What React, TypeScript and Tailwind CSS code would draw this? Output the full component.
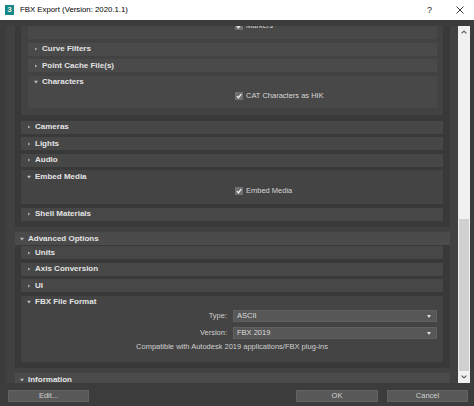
import React from "react";

const font = "font-['Liberation_Sans',Arial,sans-serif]";

function Caret({ open }: { open?: boolean }) {
  return open ? (
    <svg width="4" height="4" viewBox="0 0 4 4" className="shrink-0">
      <path d="M0 0.8 H4 L2 3.4 Z" fill="#bdbdbd" />
    </svg>
  ) : (
    <svg width="4" height="4" viewBox="0 0 4 4" className="shrink-0">
      <path d="M1 0.4 L3.4 2 L1 3.6 Z" fill="#a9a9a9" />
    </svg>
  );
}

function Title({ text, open }: { text: string; open?: boolean }) {
  return (
    <>
      <Caret open={open} />
      <span className="text-[8px] font-bold leading-none text-[#e4e4e4]">{text}</span>
    </>
  );
}

/* collapsed sub rollout */
function Bar({ text, tone }: { text: string; tone: "l1" | "l2" }) {
  return (
    <div
      className={
        tone === "l1"
          ? "flex h-[13px] shrink-0 items-center gap-[4px] bg-[#474747] pl-[6px]"
          : "flex h-[13px] shrink-0 items-center gap-[4px] bg-[#4a4a4a] pl-[6px]"
      }
    >
      <Title text={text} />
    </div>
  );
}

function Check({ label }: { label: string }) {
  return (
    <div className="flex h-[9px] items-center gap-[3px]">
      <div className="flex h-[8px] w-[8px] items-center justify-center bg-[#707070]">
        <svg width="6" height="6" viewBox="0 0 6 6">
          <path d="M0.8 3.1 L2.4 4.7 L5.3 1.2" stroke="#f2f2f2" strokeWidth="1.3" fill="none" />
        </svg>
      </div>
      <span className="text-[7.5px] leading-none text-[#d6d6d6]">{label}</span>
    </div>
  );
}

function Dropdown({ value }: { value: string }) {
  return (
    <div className="flex h-[12px] flex-1 items-center justify-between border border-[#606060] bg-[#575757] pl-[3px] pr-[5px]">
      <span className="text-[7.5px] leading-none text-[#dcdcdc]">{value}</span>
      <svg width="4" height="3" viewBox="0 0 4 3">
        <path d="M0 0 H4 L2 3 Z" fill="#e0e0e0" />
      </svg>
    </div>
  );
}

function Button({ label, w }: { label: string; w: string }) {
  return (
    <div
      className={`${w} flex h-[12px] items-center justify-center border border-[#626262] bg-[#585858] text-[7.5px] leading-none text-[#d2d2d2]`}
    >
      {label}
    </div>
  );
}

function Scrollbar() {
  return (
    <div className="flex w-[12px] shrink-0 flex-col bg-[#f0f0f0]">
      <div className="flex h-[12px] items-center justify-center">
        <svg width="6" height="4" viewBox="0 0 6 4">
          <path d="M0.6 3.4 L3 1 L5.4 3.4" stroke="#606060" strokeWidth="1.2" fill="none" />
        </svg>
      </div>
      <div className="flex flex-1 flex-col justify-end">
        <div className="mx-[1px] h-[152px] bg-[#d0d0d0]" />
      </div>
      <div className="flex h-[12px] items-center justify-center">
        <svg width="6" height="4" viewBox="0 0 6 4">
          <path d="M0.6 0.6 L3 3 L5.4 0.6" stroke="#606060" strokeWidth="1.2" fill="none" />
        </svg>
      </div>
    </div>
  );
}

export default function App() {
  return (
    <div className={`${font} flex h-[406px] w-[474px] flex-col overflow-hidden bg-[#3c3c3c]`}>
      {/* window caption */}
      <div className="flex h-[20px] shrink-0 items-center bg-white pl-[5px] pr-[10px]">
        <div className="flex h-[10px] w-[9px] items-center justify-center bg-[#15868c] text-[8px] font-bold leading-none text-[#f3f0d8]">
          3
        </div>
        <span className="ml-[6px] text-[7.8px] leading-none text-black">FBX Export (Version: 2020.1.1)</span>
        <div className="ml-auto flex items-center gap-[24px]">
          <span className="text-[9px] leading-none text-[#222]">?</span>
          <svg width="8" height="8" viewBox="0 0 8 8">
            <path d="M0.5 0.5 L7.5 7.5 M7.5 0.5 L0.5 7.5" stroke="#222" strokeWidth="0.9" />
          </svg>
        </div>
      </div>

      {/* rollout viewport */}
      <div className="ml-[6px] mr-[4px] mt-[6px] flex h-[357px] shrink-0 bg-[#414141]">
        <div className="flex flex-1 flex-col gap-[5px] overflow-hidden pl-[9px] pr-[8px]">
          {/* Include */}
          <div className="flex shrink-0 flex-col gap-[3.5px] bg-[#393939] pb-[6.5px] pl-[6px] pr-[7px]">
            {/* Animation */}
            <div className="mb-[2px] flex flex-col gap-[3.5px] bg-[#424242] pb-[7px] pl-[7px] pr-[6px]">
              <div className="h-[13px] shrink-0 overflow-hidden bg-[#484848] pl-[207px]">
                <div className="-mt-[5px]">
                  <Check label="Markers" />
                </div>
              </div>
              <Bar text="Curve Filters" tone="l2" />
              <Bar text="Point Cache File(s)" tone="l2" />
              <div className="flex flex-col bg-[#484848]">
                <div className="flex h-[13px] items-center gap-[4px] pl-[6px]">
                  <Title text="Characters" open />
                </div>
                <div className="pb-[7.5px] pl-[207px] pt-[3px]">
                  <Check label="CAT Characters as HIK" />
                </div>
              </div>
            </div>
            <Bar text="Cameras" tone="l1" />
            <Bar text="Lights" tone="l1" />
            <Bar text="Audio" tone="l1" />
            <div className="flex flex-col bg-[#444444]">
              <div className="flex h-[13px] items-center gap-[4px] pl-[6px]">
                <Title text="Embed Media" open />
              </div>
              <div className="pb-[9px] pl-[214px] pt-[3px]">
                <Check label="Embed Media" />
              </div>
            </div>
            <Bar text="Shell Materials" tone="l1" />
          </div>

          {/* Advanced Options */}
          <div className="flex shrink-0 flex-col bg-[#393939]">
            <div className="flex h-[13px] items-center gap-[4px] bg-[#4b4b4b] pl-[5px]">
              <Title text="Advanced Options" open />
            </div>
            <div className="flex flex-col gap-[3.5px] pb-[6px] pl-[6px] pr-[7px] pt-[1px]">
              <Bar text="Units" tone="l1" />
              <Bar text="Axis Conversion" tone="l1" />
              <Bar text="UI" tone="l1" />
              <div className="flex flex-col bg-[#444444]">
                <div className="flex h-[13px] items-center gap-[4px] pl-[6px]">
                  <Title text="FBX File Format" open />
                </div>
                <div className="flex flex-col pb-[10px] pr-[6px] pt-[1.5px]">
                  <div className="flex items-center gap-[6px]">
                    <span className="w-[206px] text-right text-[7.5px] leading-none text-[#cfcfcf]">Type:</span>
                    <Dropdown value="ASCII" />
                  </div>
                  <div className="mt-[5px] flex items-center gap-[6px]">
                    <span className="w-[206px] text-right text-[7.5px] leading-none text-[#cfcfcf]">Version:</span>
                    <Dropdown value="FBX 2019" />
                  </div>
                  <div className="mt-[3px] flex h-[10px] items-center justify-center pl-[6px] text-[7.5px] leading-none text-[#cfcfcf]">
                    Compatible with Autodesk 2019 applications/FBX plug-ins
                  </div>
                </div>
              </div>
            </div>
          </div>

          {/* Information */}
          <div className="flex shrink-0 flex-col bg-[#393939]">
            <div className="flex h-[13px] items-center gap-[4px] bg-[#4b4b4b] pl-[5px]">
              <Title text="Information" open />
            </div>
          </div>
        </div>
        <Scrollbar />
      </div>

      {/* dialog buttons */}
      <div className="mt-[7px] flex items-center pl-[8px] pr-[6px]">
        <Button label="Edit..." w="w-[81px]" />
        <div className="flex-1" />
        <Button label="OK" w="w-[82px]" />
        <div className="w-[9px]" />
        <Button label="Cancel" w="w-[81px]" />
      </div>
    </div>
  );
}
